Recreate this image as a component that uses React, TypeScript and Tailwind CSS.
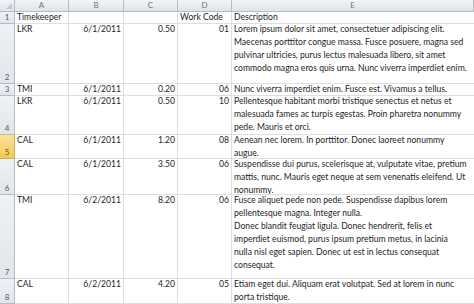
const font = { fontFamily: "Lato, 'Liberation Sans', sans-serif" };

type Row = {
  n: number;
  h: string;
  a: string;
  b: string;
  c: string;
  d: string;
  e: string[];
  active?: boolean;
};

const rows: Row[] = [
  { n: 1, h: "h-[12px]", a: "Timekeeper", b: "Date", c: "Hours", d: "Work Code", e: ["Description"] },
  {
    n: 2,
    h: "h-[60px]",
    a: "LKR",
    b: "6/1/2011",
    c: "0.50",
    d: "01",
    e: [
      "Lorem ipsum dolor sit amet, consectetuer adipiscing elit.",
      "Maecenas porttitor congue massa. Fusce posuere, magna sed",
      "pulvinar ultricies, purus lectus malesuada libero, sit amet",
      "commodo magna eros quis urna. Nunc viverra imperdiet enim.",
    ],
  },
  { n: 3, h: "h-[12px]", a: "TMI", b: "6/1/2011", c: "0.20", d: "06", e: ["Nunc viverra imperdiet enim. Fusce est. Vivamus a tellus."] },
  {
    n: 4,
    h: "h-[39px]",
    a: "LKR",
    b: "6/1/2011",
    c: "0.50",
    d: "10",
    e: [
      "Pellentesque habitant morbi tristique senectus et netus et",
      "malesuada fames ac turpis egestas. Proin pharetra nonummy",
      "pede. Mauris et orci.",
    ],
  },
  {
    n: 5,
    h: "h-[24px]",
    a: "CAL",
    b: "6/1/2011",
    c: "1.20",
    d: "08",
    e: ["Aenean nec lorem. In porttitor. Donec laoreet nonummy", "augue."],
    active: true,
  },
  {
    n: 6,
    h: "h-[36px]",
    a: "CAL",
    b: "6/1/2011",
    c: "3.50",
    d: "06",
    e: [
      "Suspendisse dui purus, scelerisque at, vulputate vitae, pretium",
      "mattis, nunc. Mauris eget neque at sem venenatis eleifend. Ut",
      "nonummy.",
    ],
  },
  {
    n: 7,
    h: "h-[84px]",
    a: "TMI",
    b: "6/2/2011",
    c: "8.20",
    d: "06",
    e: [
      "Fusce aliquet pede non pede. Suspendisse dapibus lorem",
      "pellentesque magna. Integer nulla.",
      "Donec blandit feugiat ligula. Donec hendrerit, felis et",
      "imperdiet euismod, purus ipsum pretium metus, in lacinia",
      "nulla nisl eget sapien. Donec ut est in lectus consequat",
      "consequat.",
    ],
  },
  {
    n: 8,
    h: "h-[25px]",
    a: "CAL",
    b: "6/2/2011",
    c: "4.20",
    d: "05",
    e: ["Etiam eget dui. Aliquam erat volutpat. Sed at lorem in nunc", "porta tristique."],
  },
];

const cols = "grid grid-cols-[15px_54px_55px_54px_54px_1fr]";
const cell = "border-r border-b border-[#dcdedf] px-[2px] leading-[13px] overflow-hidden whitespace-nowrap";

export default function App() {
  return (
    <div className="w-[474px] h-[304px] overflow-hidden bg-white text-[8.6px] text-[#1e1e1e]" style={font}>
      <div className={`${cols} h-[12px] bg-gradient-to-b from-[#f2f4f7] to-[#dde2e8] text-[#6a7584] text-[8px] leading-[11px]`}>
        <div className="relative border-r border-b border-[#b5bcc6]">
          <div className="absolute right-[2px] bottom-[2px] w-0 h-0 border-l-[6px] border-l-transparent border-b-[6px] border-b-[#c4c9cf]" />
        </div>
        {["A", "B", "C", "D", "E"].map((l) => (
          <div key={l} className="border-r border-b border-[#b5bcc6] text-center">
            {l}
          </div>
        ))}
      </div>
      {rows.map((r) => (
        <div key={r.n} className={`${cols} ${r.h}`}>
          <div
            className={`flex items-end justify-center border-r border-b text-[8px] leading-[11px] ${
              r.active
                ? "bg-gradient-to-b from-[#fbe39b] to-[#f5c94f] border-[#d9a93a] text-[#6b5a2a]"
                : "bg-gradient-to-b from-[#eef1f5] to-[#e2e6eb] border-[#b5bcc6] text-[#4f5b6a]"
            }`}
          >
            {r.n}
          </div>
          <div className={cell}>
            <div className="-mt-[1px]">{r.a}</div>
          </div>
          <div className={`${cell} text-right`}>
            <div className="-mt-[1px]">{r.n === 1 ? "" : r.b}</div>
          </div>
          <div className={`${cell} text-right`}>
            <div className="-mt-[1px]">{r.n === 1 ? "" : r.c}</div>
          </div>
          <div className={`${cell} ${r.n === 1 ? "text-left" : "text-right"}`}>
            <div className="-mt-[1px]">{r.d}</div>
          </div>
          <div className={`${cell} border-r-0`}>
            <div className="-mt-[1px]">
              {r.e.map((line, i) => (
                <div key={i}>{line}</div>
              ))}
            </div>
          </div>
        </div>
      ))}
    </div>
  );
}
